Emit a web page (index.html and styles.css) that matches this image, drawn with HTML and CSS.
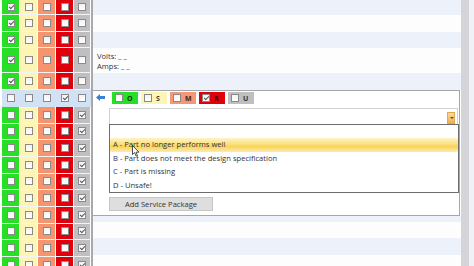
FILE: index.html
```html
<!DOCTYPE html>
<html lang="en">

<head>
    <meta charset="UTF-8" />
    <title>Service Codes</title>
    <link rel="stylesheet" href="styles.css">
</head>

<body>
    <div class="screen">
        <div class="grid">
            <div class="row h15"><div class="cell g"><span class="cb on"></span></div><div class="cell y"><span class="cb"></span></div><div class="cell o"><span class="cb"></span></div><div class="cell r"><span class="cb"></span></div><div class="cell u"><span class="cb"></span></div></div>
            <div class="row h17"><div class="cell g"><span class="cb on"></span></div><div class="cell y"><span class="cb"></span></div><div class="cell o"><span class="cb"></span></div><div class="cell r"><span class="cb"></span></div><div class="cell u"><span class="cb"></span></div></div>
            <div class="row h16"><div class="cell g"><span class="cb on"></span></div><div class="cell y"><span class="cb"></span></div><div class="cell o"><span class="cb"></span></div><div class="cell r"><span class="cb"></span></div><div class="cell u"><span class="cb"></span></div></div>
            <div class="row h25"><div class="cell g"><span class="cb on"></span></div><div class="cell y"><span class="cb"></span></div><div class="cell o"><span class="cb"></span></div><div class="cell r"><span class="cb"></span></div><div class="cell u"><span class="cb"></span></div></div>
            <div class="row h17"><div class="cell g"><span class="cb on"></span></div><div class="cell y"><span class="cb"></span></div><div class="cell o"><span class="cb"></span></div><div class="cell r"><span class="cb"></span></div><div class="cell u"><span class="cb"></span></div></div>
            <div class="row h17 selected"><div class="cell"><span class="cb"></span></div><div class="cell"><span class="cb"></span></div><div class="cell"><span class="cb"></span></div><div class="cell"><span class="cb on"></span></div><div class="cell"><span class="cb"></span></div></div>
            <div class="row"><div class="cell g"><span class="cb"></span></div><div class="cell y"><span class="cb"></span></div><div class="cell o"><span class="cb"></span></div><div class="cell r"><span class="cb"></span></div><div class="cell u"><span class="cb on"></span></div></div>
            <div class="row"><div class="cell g"><span class="cb"></span></div><div class="cell y"><span class="cb"></span></div><div class="cell o"><span class="cb"></span></div><div class="cell r"><span class="cb"></span></div><div class="cell u"><span class="cb on"></span></div></div>
            <div class="row"><div class="cell g"><span class="cb"></span></div><div class="cell y"><span class="cb"></span></div><div class="cell o"><span class="cb"></span></div><div class="cell r"><span class="cb"></span></div><div class="cell u"><span class="cb on"></span></div></div>
            <div class="row"><div class="cell g"><span class="cb"></span></div><div class="cell y"><span class="cb"></span></div><div class="cell o"><span class="cb"></span></div><div class="cell r"><span class="cb"></span></div><div class="cell u"><span class="cb on"></span></div></div>
            <div class="row"><div class="cell g"><span class="cb"></span></div><div class="cell y"><span class="cb"></span></div><div class="cell o"><span class="cb"></span></div><div class="cell r"><span class="cb"></span></div><div class="cell u"><span class="cb on"></span></div></div>
            <div class="row"><div class="cell g"><span class="cb"></span></div><div class="cell y"><span class="cb"></span></div><div class="cell o"><span class="cb"></span></div><div class="cell r"><span class="cb"></span></div><div class="cell u"><span class="cb on"></span></div></div>
            <div class="row"><div class="cell g"><span class="cb"></span></div><div class="cell y"><span class="cb"></span></div><div class="cell o"><span class="cb"></span></div><div class="cell r"><span class="cb"></span></div><div class="cell u"><span class="cb on"></span></div></div>
            <div class="row"><div class="cell g"><span class="cb"></span></div><div class="cell y"><span class="cb"></span></div><div class="cell o"><span class="cb"></span></div><div class="cell r"><span class="cb"></span></div><div class="cell u"><span class="cb on"></span></div></div>
            <div class="row"><div class="cell g"><span class="cb"></span></div><div class="cell y"><span class="cb"></span></div><div class="cell o"><span class="cb"></span></div><div class="cell r"><span class="cb"></span></div><div class="cell u"><span class="cb on"></span></div></div>
            <div class="row"><div class="cell g"><span class="cb"></span></div><div class="cell y"><span class="cb"></span></div><div class="cell o"><span class="cb"></span></div><div class="cell r"><span class="cb"></span></div><div class="cell u"><span class="cb on"></span></div></div>
        </div>

        <div class="divider"></div>

        <div class="main">
            <div class="mrow alt h15"></div>
            <div class="mrow h17"></div>
            <div class="mrow alt h16"></div>
            <div class="mrow h25 readings">
                <div>Volts: _ _</div>
                <div>Amps: _ _</div>
            </div>
            <div class="mrow alt h17"></div>

            <div class="panel">
                <div class="codes">
                    <svg class="back" width="9" height="7" viewBox="0 0 9 7">
                        <polygon points="0,3.5 4,0 4,2 9,2 9,5 4,5 4,7" fill="#3b7fd6" />
                    </svg>
                    <div class="chip c-o"><span class="cb"></span>O</div>
                    <div class="chip c-s"><span class="cb"></span>S</div>
                    <div class="chip c-m"><span class="cb"></span>M</div>
                    <div class="chip c-r"><span class="cb on"></span>R</div>
                    <div class="chip c-u"><span class="cb"></span>U</div>
                </div>
                <div class="combo">
                    <span class="drop"></span>
                </div>
                <ul class="list">
                    <li></li>
                    <li class="hover">A - Part no longer performs well</li>
                    <li>B - Part does not meet the design specification</li>
                    <li>C - Part is missing</li>
                    <li>D - Unsafe!</li>
                </ul>
                <button class="add">Add Service Package</button>
                <svg class="cursor" width="8" height="12" viewBox="0 0 8 12">
                    <polygon points="0.5,0.5 0.5,9.5 2.6,7.6 4.2,11.2 5.5,10.6 4,7.2 7,7.2" fill="#fff" stroke="#222" stroke-width="0.8" />
                </svg>
            </div>

            <div class="mrow alt h6"></div>
            <div class="mrow h16"></div>
            <div class="mrow alt h17"></div>
            <div class="mrow h17"></div>
        </div>

        <div class="scroll"></div>
    </div>
</body>

</html>
```

FILE: styles.css
```css
* {
    box-sizing: border-box;
    margin: 0;
    padding: 0;
}

body {
    font-family: 'Open Sans', 'Noto Sans', sans-serif;
    font-size: 7.6px;
    color: #333;
    background: #fff;
    overflow: hidden;
}

.screen {
    display: flex;
    height: 266px;
    overflow: hidden;
}

/* left check grid */

.grid {
    width: 91px;
    padding-left: 2px;
    background: #fff;
}

.row {
    display: flex;
    gap: 1px;
    height: 16.67px;
    border-bottom: 1px solid #f4f4f4;
}

.h6 { height: 6px; }
.h15 { height: 15px; }
.h16 { height: 16px; }
.h17 { height: 17px; }
.h25 { height: 25px; }

.cell {
    width: 17px;
    display: flex;
    align-items: center;
    justify-content: center;
}

.cell:last-child {
    width: 16px;
}

.g { background: #27df27; }
.y { background: #fdf5b6; }
.o { background: #f4956f; }
.r { background: #e0000b; }
.u { background: #bfbfc1; }

.row.selected {
    background: #d3e1f5;
    border-bottom-color: #d3e1f5;
}

.cb {
    position: relative;
    display: inline-block;
    width: 8px;
    height: 8px;
    border: 1px solid #8a8a8a;
    background: linear-gradient(#f2f2f2, #fff);
    flex-shrink: 0;
}

.cb.on::after {
    content: '';
    position: absolute;
    left: 2px;
    top: 0;
    width: 2px;
    height: 4px;
    border: solid #555;
    border-width: 0 1.3px 1.3px 0;
    transform: rotate(45deg);
}

.divider {
    width: 2px;
    background: #a9a9ab;
}

/* right content */

.main {
    width: 368px;
}

.mrow {
    background: #fdfdfe;
}

.mrow.alt {
    background: #edf1fa;
}

.readings {
    padding: 3px 0 0 4px;
    line-height: 10px;
}

.panel {
    position: relative;
    width: 367px;
    height: 126px;
    background: #fff;
    border: 1px solid #a6a6a8;
    border-left: none;
    padding: 1px 0 0 0;
}

.codes {
    display: flex;
    align-items: center;
    gap: 3px;
    height: 12px;
    padding-left: 3px;
}

.back {
    margin: 0 4px 1px 0;
}

.chip {
    display: flex;
    align-items: center;
    gap: 4px;
    width: 26px;
    height: 12px;
    padding-left: 3px;
    font-weight: bold;
    font-size: 7px;
}

.c-o { background: #27df27; color: #0d3d0d; }
.c-s { background: #fdf5b6; color: #4a4420; }
.c-m { background: #f29878; color: #4a2414; }
.c-r { background: #e0000b; color: #5a0000; }
.c-u { background: #bfbfc1; color: #333; }

.combo {
    position: relative;
    margin: 4px 1px 0 16px;
    height: 16px;
    border: 1px solid #d2d2d4;
    border-bottom: none;
    display: flex;
    justify-content: flex-end;
    align-items: center;
    padding-right: 2px;
}

.drop {
    position: relative;
    width: 8px;
    height: 12px;
    margin-top: 2px;
    background: linear-gradient(#fbd99a, #f0b050);
    border: 1px solid #e2a850;
}

.drop::after {
    content: '';
    position: absolute;
    left: 1.5px;
    top: 4px;
    border-left: 2px solid transparent;
    border-right: 2px solid transparent;
    border-top: 2px solid #6a4a20;
}

.list {
    list-style: none;
    margin: 0 0 0 16px;
    width: 350px;
    height: 69px;
    border: 1px solid #6e6e70;
    background: #fff;
}

.list li {
    height: 13.4px;
    line-height: 13.4px;
    padding-left: 3px;
    white-space: nowrap;
}

.list li.hover {
    background: linear-gradient(#fff3c6, #fbe07c 45%, #f8d45a 60%, #fdebb0);
    border-radius: 2px;
}

.add {
    display: block;
    margin: 4px 0 0 16px;
    width: 104px;
    height: 14px;
    background: #dedede;
    border: 1px solid #c6c6c6;
    font-family: inherit;
    font-size: 7.6px;
    color: #333;
}

.cursor {
    position: absolute;
    left: 39px;
    top: 54px;
}

.scroll {
    width: 13px;
    border-left: 8px solid #d5d5d8;
    background: #eef1f8;
}
```
